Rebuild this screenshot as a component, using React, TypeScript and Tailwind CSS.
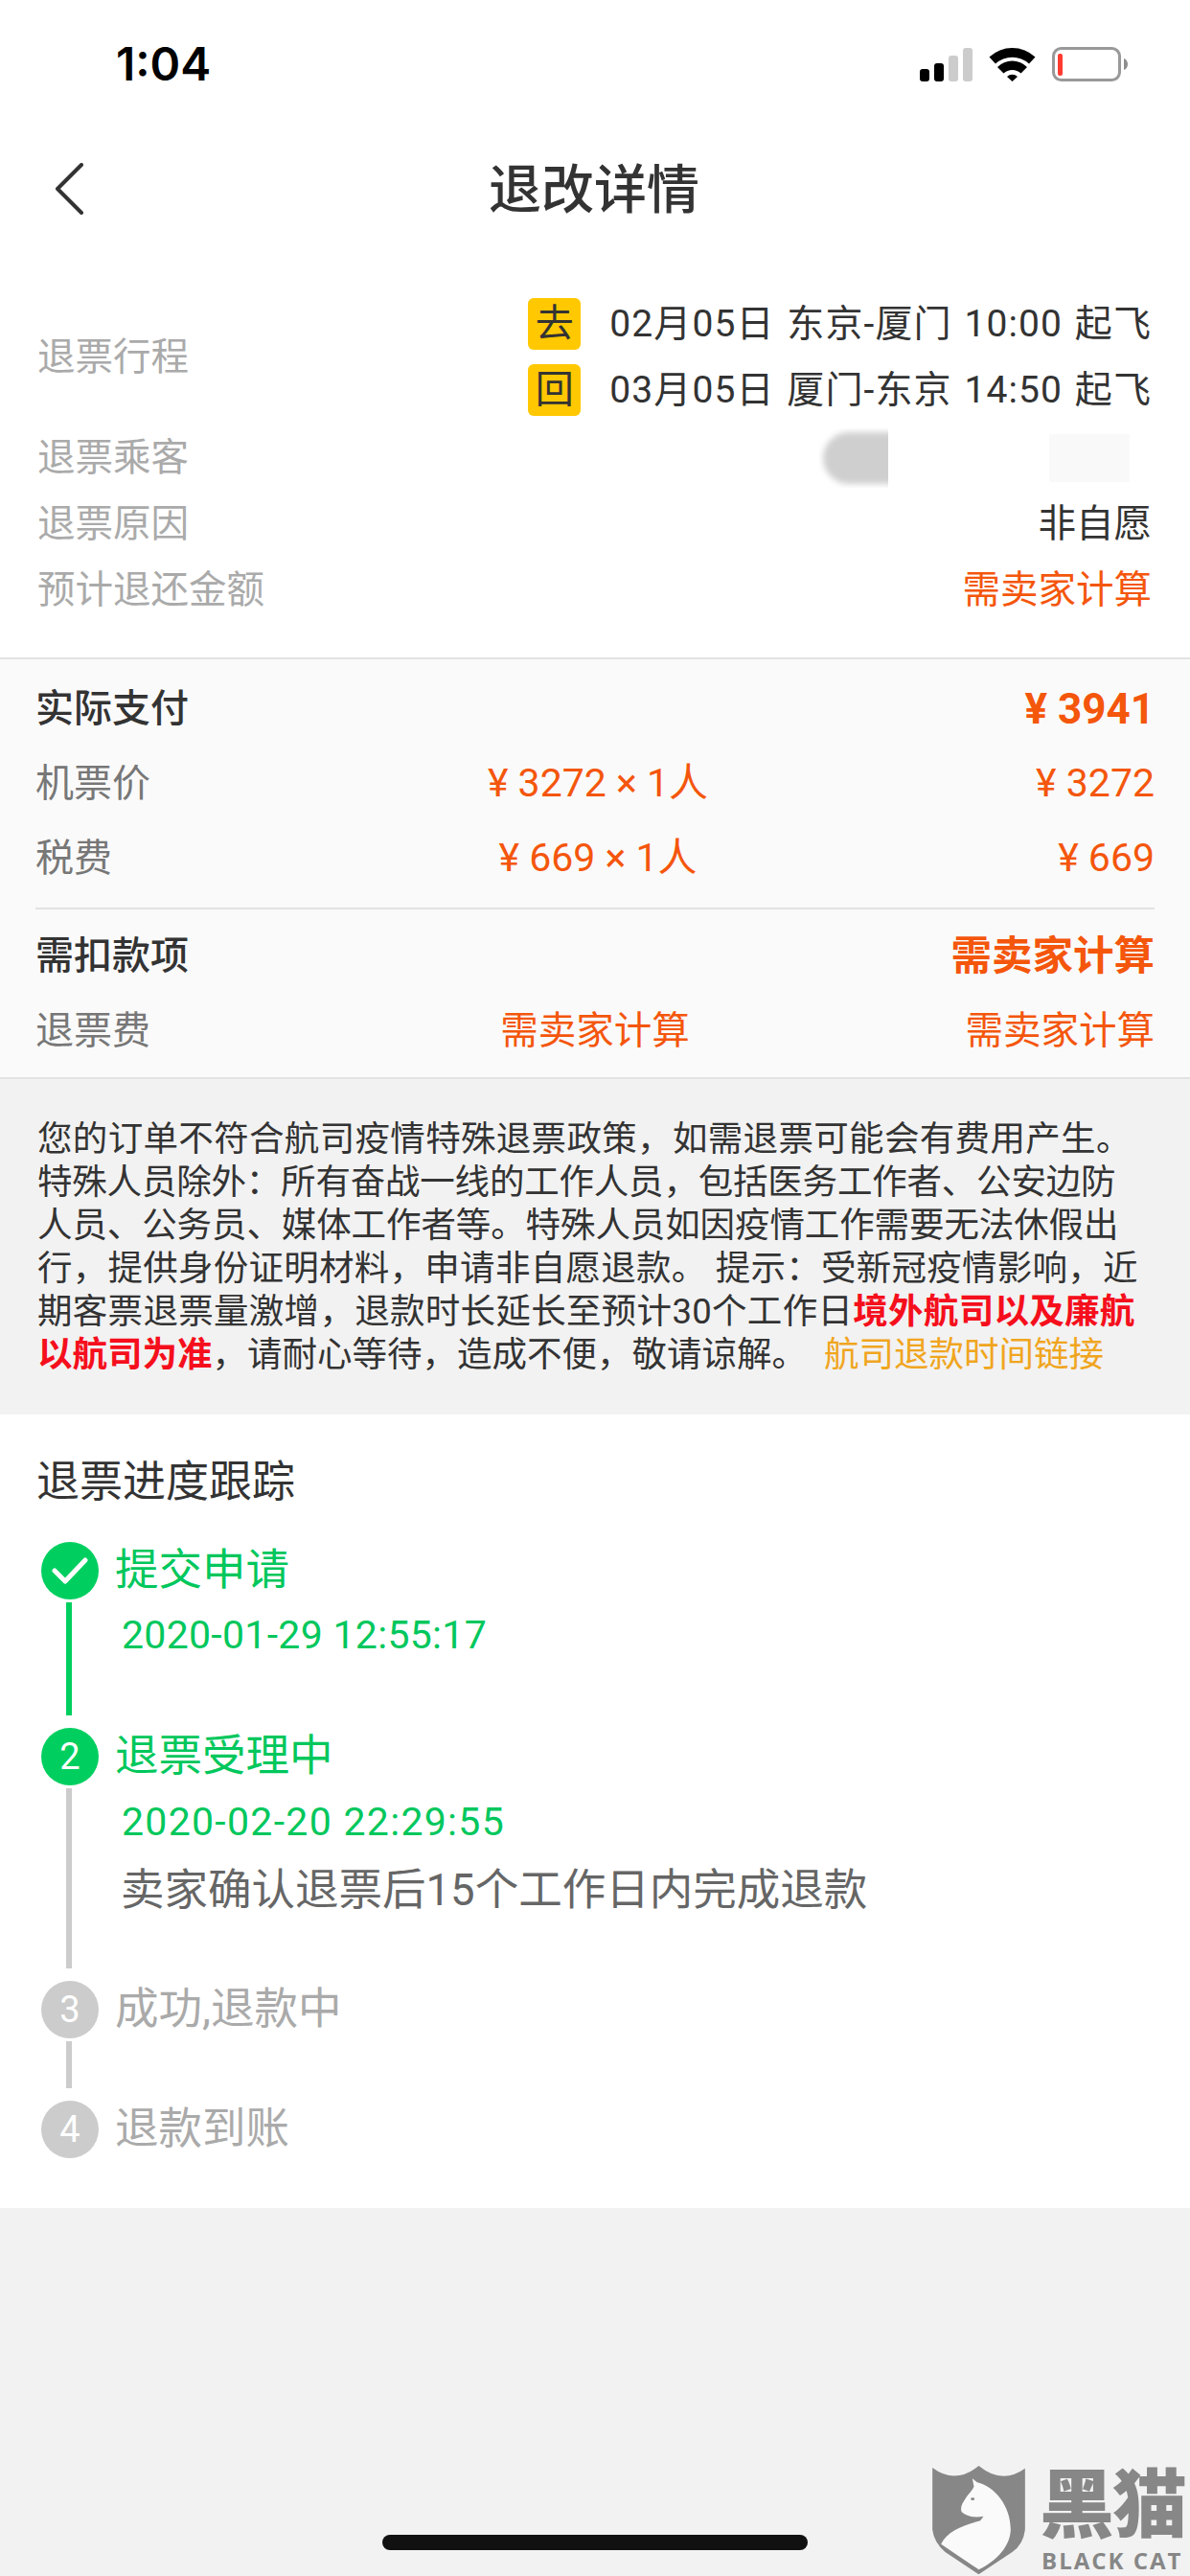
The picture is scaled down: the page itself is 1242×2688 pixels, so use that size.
const FONT = "[font-family:Roboto,'Noto_Sans_CJK_SC',sans-serif]";

function StatusIcons() {
  return (
    <svg width="217" height="36" viewBox="0 0 217 36">
      <rect x="0" y="23" width="10" height="13" rx="3" fill="#000" />
      <rect x="15" y="17" width="10" height="19" rx="3" fill="#000" />
      <rect x="30" y="9" width="10" height="27" rx="3" fill="#ccc" />
      <rect x="45" y="1" width="10" height="35" rx="3" fill="#ccc" />
      <path d="M72.5 10.5A35 35 0 0 1 120.5 10.5L114 17.5A26 26 0 0 0 79 17.5Z" fill="#000" />
      <path d="M81 21A22 22 0 0 1 112 21L105.5 27.5A13 13 0 0 0 87.5 27.5Z" fill="#000" />
      <path d="M91 31A8 8 0 0 1 102 31L96.5 36Z" fill="#000" />
      <rect x="139.5" y="1.5" width="69" height="33" rx="8" fill="#fff" stroke="#999" strokeWidth="3" />
      <rect x="144" y="7" width="5" height="23" rx="2" fill="#ff3b30" />
      <path d="M213 12C216 13 217 16 217 18C217 20 216 23 213 24Z" fill="#8e8e8e" />
    </svg>
  );
}

function TripRow({ tag, text }: { tag: string; text: string }) {
  return (
    <div className="flex h-[54px] items-center justify-end">
      <div className="flex h-[54px] w-[55px] items-center justify-center rounded-[6px] bg-[#ffc800] text-[40px] text-[#333]">
        {tag}
      </div>
      <div className="ml-[30px] text-[39px] leading-[54px] tracking-[1.1px] [word-spacing:2px] text-[#333] whitespace-nowrap">
        {text}
      </div>
    </div>
  );
}

function InfoRow({ label, children }: { label: string; children?: React.ReactNode }) {
  return (
    <div className="flex h-[69px] items-center justify-between text-[39.5px]">
      <span className="text-[#aaa]">{label}</span>
      {children}
    </div>
  );
}

// money rows use slightly larger digits than the Chinese-only rows
function FeeRow({ label, mid, right, strong, money }: { label: string; mid?: string; right: string; strong?: boolean; money?: boolean }) {
  return (
    <div className="grid h-[78px] grid-cols-3 items-center text-[40px]">
      <span className={strong ? 'font-medium text-[#333]' : 'text-[#777]'}>{label}</span>
      <span className={`text-center text-[#f4560c] whitespace-nowrap ${money ? 'pl-[6px] text-[41px]' : 'text-[39.5px]'}`}>{mid}</span>
      <span
        className={`text-right text-[#f4560c] whitespace-nowrap ${
          strong ? (money ? 'text-[44px] font-bold' : 'text-[42.5px] font-bold') : money ? 'text-[41px]' : 'text-[39.5px]'
        }`}
      >
        {right}
      </span>
    </div>
  );
}

function StepTitle({ mark, title, active }: { mark: React.ReactNode; title: string; active: boolean }) {
  return (
    <div className="flex h-[60px] items-center">
      <div
        className={`flex h-[60px] w-[60px] items-center justify-center rounded-full text-[38px] text-white ${
          active ? 'bg-[#00cf60]' : 'bg-[#cccccc]'
        }`}
      >
        {mark}
      </div>
      <div className={`ml-[17px] text-[45.5px] ${active ? 'text-[#00c75c]' : 'text-[#aaa]'}`}>{title}</div>
    </div>
  );
}

export default function App() {
  return (
    <div className={`relative h-[2688px] w-[1242px] overflow-hidden bg-[#f2f2f2] ${FONT}`}>
      <div className="bg-white">
        {/* Status bar */}
        <div className="flex h-[134px] items-center justify-between pl-[121px] pr-[65px]">
          <span className="text-[48px] font-semibold text-black [font-family:Inter,sans-serif]">1:04</span>
          <div>
            <StatusIcons />
          </div>
        </div>

        {/* Nav */}
        <div className="relative flex h-[128px] items-center justify-center">
          <svg className="absolute left-[56px] top-[36px]" width="32" height="54" viewBox="0 0 32 54" fill="none">
            <path d="M29 2L4 27L29 52" stroke="#333" strokeWidth="4" strokeLinecap="round" strokeLinejoin="round" />
          </svg>
          <h1 className="-ml-[2px] text-[55px] font-medium text-[#333]">退改详情</h1>
        </div>

        {/* Refund summary */}
        <div className="relative border-b-2 border-[#e2e2e2] pb-[36px] pl-[39px] pr-[40px] pt-[49px]">
          <div className="flex items-center justify-between">
            <span className="text-[39.5px] text-[#aaa]">退票行程</span>
            <div className="flex flex-col gap-[15px]">
              <TripRow tag="去" text="02月05日 东京-厦门 10:00 起飞" />
              <TripRow tag="回" text="03月05日 厦门-东京 14:50 起飞" />
            </div>
          </div>
          <div className="mt-[9px]">
            <InfoRow label="退票乘客">
              {/* redacted passenger name */}
              <div className="flex items-center">
                <div className="mr-[168px] h-[62px] w-[72px] overflow-hidden">
                  <div className="ml-[4px] mt-[4px] h-[54px] w-[90px] rounded-l-[30px] bg-[#cfcfcf] blur-[3px]" />
                </div>
                <div className="h-[50px] w-[84px] bg-[#f9f9f9]" />
                <div className="w-[23px]" />
              </div>
            </InfoRow>
            <InfoRow label="退票原因">
              <span className="text-[#333]">非自愿</span>
            </InfoRow>
            <InfoRow label="预计退还金额">
              <span className="text-[#f4560c]">需卖家计算</span>
            </InfoRow>
          </div>
        </div>
      </div>

      {/* Price breakdown */}
      <div className="border-b-2 border-[#e2e2e2] bg-[#fafafa] px-[37px] pb-[9px] pt-[13px]">
        <FeeRow label="实际支付" right="¥ 3941" strong money />
        <FeeRow label="机票价" mid="¥ 3272 × 1人" right="¥ 3272" money />
        <FeeRow label="税费" mid="¥ 669 × 1人" right="¥ 669" money />
        <div className="mb-[10px] mt-[12px] h-[2px] bg-[#e2e2e2]" />
        <FeeRow label="需扣款项" right="需卖家计算" strong />
        <FeeRow label="退票费" mid="需卖家计算" right="需卖家计算" />
      </div>

      {/* Notice */}
      <div className="whitespace-nowrap pb-[40px] pl-[39px] pt-[40px] text-[36.5px] leading-[45px] text-[#333]">
        <div className="tracking-[0.33px]">您的订单不符合航司疫情特殊退票政策，如需退票可能会有费用产生。</div>
        <div className="tracking-[-0.2px]">特殊人员除外：所有奋战一线的工作人员，包括医务工作者、公安边防</div>
        <div className="tracking-[-0.1px]">人员、公务员、媒体工作者等。特殊人员如因疫情工作需要无法休假出</div>
        <div className="tracking-[0.26px]">行，提供身份证明材料，申请非自愿退款。 提示：受新冠疫情影响，近</div>
        <div className="tracking-[0.3px]">
          期客票退票量激增，退款时长延长至预计30个工作日
          <span className="font-bold text-[#f50f1c]">境外航司以及廉航</span>
        </div>
        <div>
          <span className="font-bold text-[#f50f1c]">以航司为准</span>
          ，请耐心等待，造成不便，敬请谅解。
          <span className="ml-[18px] text-[#f0a51e]">航司退款时间链接</span>
        </div>
      </div>

      {/* Progress */}
      <div className="bg-white pb-[52px] pl-[43px] pt-[47px]">
        <h2 className="-ml-[5px] mb-[38px] h-[48px] text-[45px] leading-[48px] text-[#333]">退票进度跟踪</h2>

        <StepTitle
          active
          title="提交申请"
          mark={
            <svg width="38" height="30" viewBox="0 0 38 30" fill="none">
              <path d="M3 15L14 26L35 4" stroke="#fff" strokeWidth="5" strokeLinecap="round" strokeLinejoin="round" />
            </svg>
          }
        />
        <div className="mb-[13px] mt-[3px] flex h-[118px]">
          <div className="ml-[26px] w-[6px] bg-[#00cf60]" />
          <div className="ml-[52px] pt-[12px] text-[41px] leading-[44px] tracking-[0.3px] text-[#00c75c]">
            2020-01-29 12:55:17
          </div>
        </div>

        <StepTitle active title="退票受理中" mark="2" />
        <div className="mb-[13px] mt-[3px] flex h-[188px]">
          <div className="ml-[26px] w-[6px] bg-[#cccccc]" />
          <div className="ml-[51px] pt-[13px]">
            <div className="ml-[1px] text-[41px] leading-[44px] tracking-[1.3px] text-[#00c75c]">2020-02-20 22:29:55</div>
            <div className="mt-[28px] text-[45.5px] leading-[44px] text-[#666]">卖家确认退票后15个工作日内完成退款</div>
          </div>
        </div>

        <StepTitle active={false} title="成功,退款中" mark="3" />
        <div className="mb-[13px] mt-[3px] h-[49px]">
          <div className="ml-[26px] h-full w-[6px] bg-[#cccccc]" />
        </div>

        <StepTitle active={false} title="退款到账" mark="4" />
      </div>

      {/* Home indicator */}
      <div className="absolute left-[399px] top-[2645px] h-[16px] w-[444px] rounded-full bg-[#111]" />

      {/* Watermark */}
      <svg className="absolute left-[973px] top-[2573px]" width="97" height="115" viewBox="220 100 290 345">
        <path
          d="M220 106Q292 160 365 100Q438 160 510 108L510 300Q505 345 470 370L365 440L260 370Q225 340 220 300Z"
          fill="#878787"
        />
        <path
          d="M345 140L360 152C415 165 465 225 465 300C463 350 425 395 365 425L247 345C265 305 320 285 370 272L380 258C350 264 325 258 312 245C305 232 315 215 322 205C330 190 345 178 350 165Z"
          fill="#fafafa"
        />
        <ellipse cx="346" cy="204" rx="6" ry="4" fill="#878787" />
      </svg>
      <div className="absolute left-[1085px] top-[2577px] text-[78px] font-black leading-[78px] tracking-[-2px] text-[#878787] whitespace-nowrap">
        黑猫
      </div>
      <div className="absolute left-[1087px] top-[2659px] text-[24px] font-bold leading-[26px] tracking-[2px] text-[#878787] whitespace-nowrap [font-family:'Open_Sans',sans-serif]">
        BLACK CAT
      </div>
    </div>
  );
}
